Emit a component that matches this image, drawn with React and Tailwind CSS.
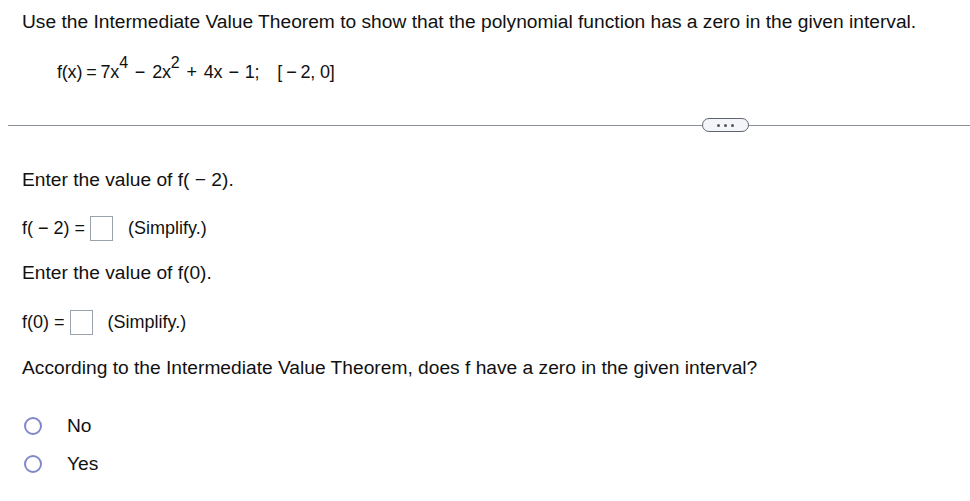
import React from 'react';

function Sup({ children }) {
  return <span className="relative -top-[10px] text-[16px] leading-none">{children}</span>;
}

function AnswerBox() {
  return <span className="block w-[23px] h-[25px] border border-[#9aa3ad] bg-white" />;
}

function Radio({ label }) {
  return (
    <label className="flex items-center gap-[25px] leading-[22px]">
      <span className="w-[18px] h-[18px] rounded-full border-2 border-[#8088cc] bg-white" />
      <span>{label}</span>
    </label>
  );
}

export default function App() {
  return (
    <div className="w-[970px] h-[501px] bg-white text-[#111] font-['Liberation_Sans',Arial,sans-serif] text-[19.2px] overflow-hidden">
      <div className="px-[22px] pt-[11px]">
        <p className="leading-[22px]">
          Use the Intermediate Value Theorem to show that the polynomial function has a zero in the given interval.
        </p>
        <p className="mt-[28px] ml-[35px] text-[18px] leading-[22px] tracking-[-0.2px]">
          f(x)<span className="mx-[4px]">=</span>7x<Sup>4</Sup>
          <span className="mx-[7px]">−</span>2x<Sup>2</Sup>
          <span className="mx-[7px]">+</span>4x<span className="mx-[6px]">−</span>1;
          <span className="ml-[18px]">[</span><span className="mx-[4px]">−</span>2, 0]
        </p>
      </div>

      <div className="mt-[35px] ml-[8px] flex items-center h-[14px]">
        <div className="w-[694px] h-px bg-[#8a9099]" />
        <div className="w-[47px] h-[14px] rounded-full border border-[#5f6570] bg-[#f3f5f8] flex items-center justify-center gap-[4px]">
          <span className="w-[3px] h-[3px] rounded-full bg-[#555]" />
          <span className="w-[3px] h-[3px] rounded-full bg-[#555]" />
          <span className="w-[3px] h-[3px] rounded-full bg-[#555]" />
        </div>
        <div className="flex-1 h-px bg-[#8a9099]" />
      </div>

      <div className="px-[22px] mt-[37px]">
        <p className="leading-[22px]">Enter the value of f( − 2).</p>
        <div className="mt-[24px] flex items-center text-[18px] h-[26px]">
          <span>f( − 2) =</span>
          <span className="ml-[5px]"><AnswerBox /></span>
          <span className="ml-[15px]">(Simplify.)</span>
        </div>
        <p className="mt-[21px] leading-[22px]">Enter the value of f(0).</p>
        <div className="mt-[25px] flex items-center text-[18px] h-[26px]">
          <span>f(0) =</span>
          <span className="ml-[5px]"><AnswerBox /></span>
          <span className="ml-[15px]">(Simplify.)</span>
        </div>
        <p className="mt-[22px] leading-[22px]">
          According to the Intermediate Value Theorem, does f have a zero in the given interval?
        </p>
        <div className="mt-[36px] ml-[2px] flex flex-col gap-[16px]">
          <Radio label="No" />
          <Radio label="Yes" />
        </div>
      </div>
    </div>
  );
}
